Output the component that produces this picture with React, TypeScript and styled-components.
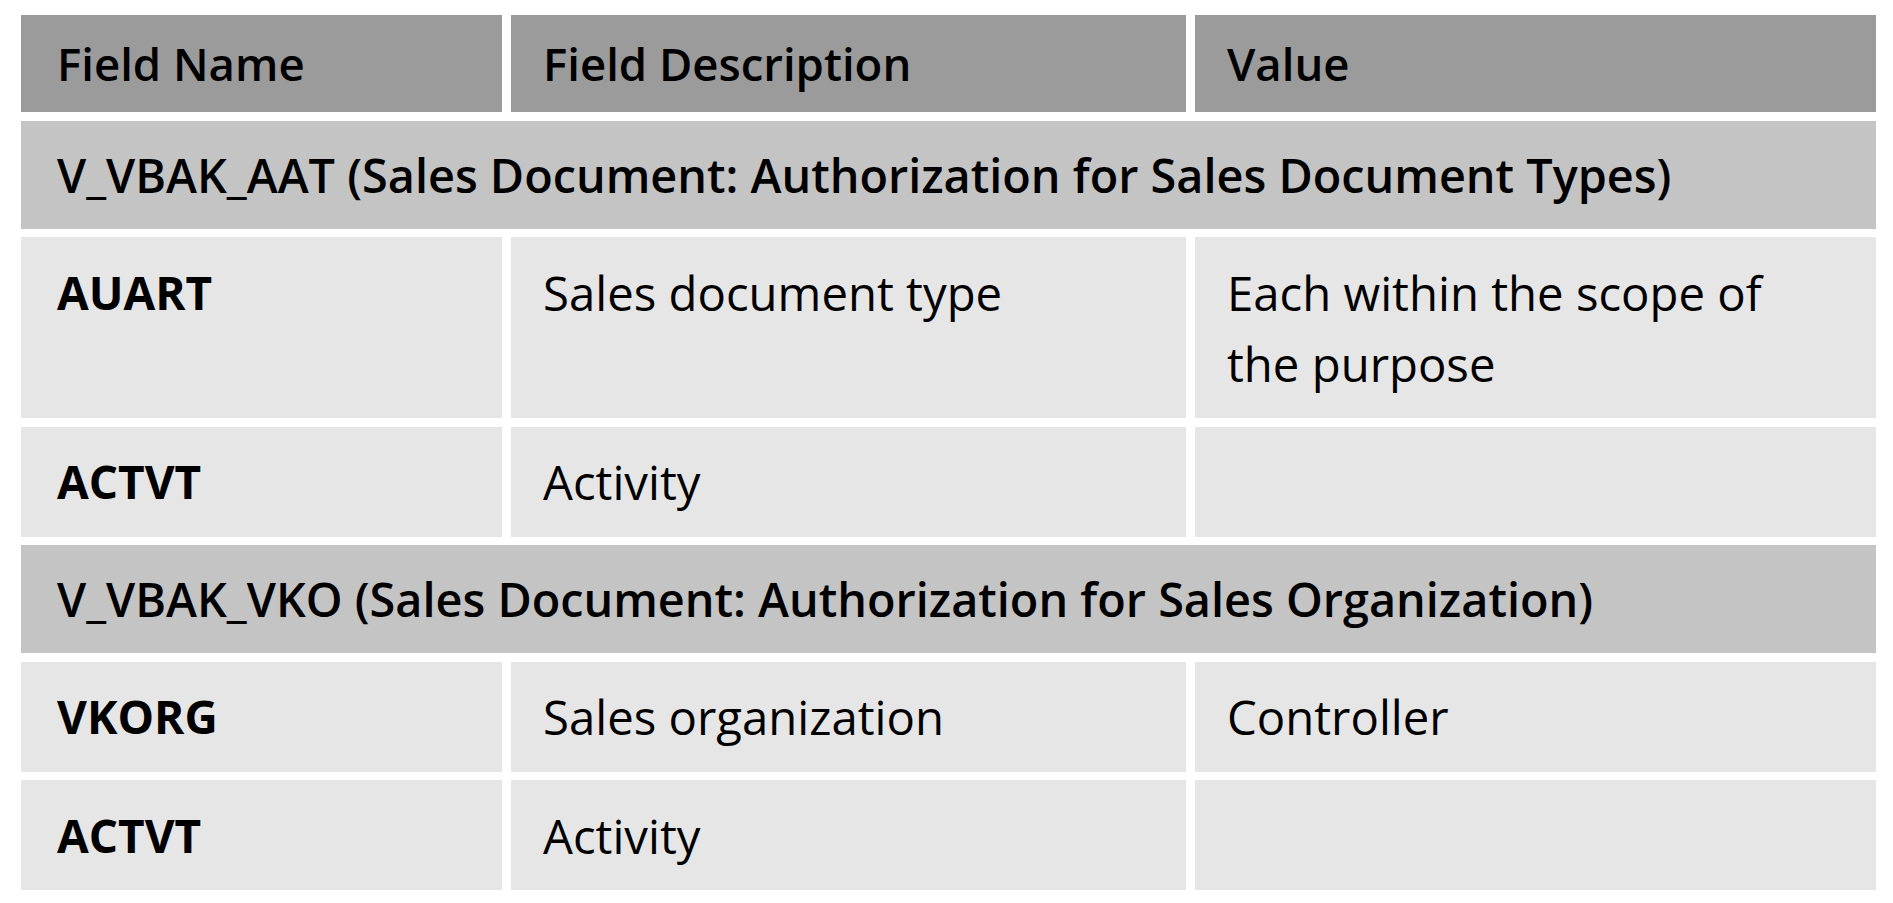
import React from "react";
import styled, { createGlobalStyle } from "styled-components";

const GlobalStyle = createGlobalStyle`
  html, body {
    margin: 0;
    padding: 0;
    background: #ffffff;
  }
  body {
    font-family: "Open Sans", "Noto Sans", sans-serif;
    color: #000000;
  }
`;

type Row =
  | { kind: "section"; title: string }
  | { kind: "field"; name: string; description: string; value: string };

const rows: Row[] = [
  { kind: "section", title: "V_VBAK_AAT (Sales Document: Authorization for Sales Document Types)" },
  { kind: "field", name: "AUART", description: "Sales document type", value: "Each within the scope of the purpose" },
  { kind: "field", name: "ACTVT", description: "Activity", value: "" },
  { kind: "section", title: "V_VBAK_VKO (Sales Document: Authorization for Sales Organization)" },
  { kind: "field", name: "VKORG", description: "Sales organization", value: "Controller" },
  { kind: "field", name: "ACTVT", description: "Activity", value: "" },
];

const App: React.FC = () => {
  return (
    <>
      <GlobalStyle />
      <Page>
        <Table>
          <HeadCell $first>Field Name</HeadCell>
          <HeadCell>Field Description</HeadCell>
          <HeadCell>Value</HeadCell>
          {rows.map((row, i) =>
            row.kind === "section" ? (
              <SectionCell key={i}>{row.title}</SectionCell>
            ) : (
              <React.Fragment key={i}>
                <NameCell>{row.name}</NameCell>
                <BodyCell>{row.description}</BodyCell>
                <ValueCell>{row.value}</ValueCell>
              </React.Fragment>
            )
          )}
        </Table>
      </Page>
    </>
  );
};

const Page = styled.div`
  padding: 15px 17px 0 21px;
`;

const Table = styled.div`
  display: grid;
  grid-template-columns: 481px 675px 1fr;
  column-gap: 9px;
  row-gap: 8.5px;
  font-size: 47px;
`;

const HeadCell = styled.div<{ $first?: boolean }>`
  background: #9b9b9b;
  padding: 13px 32px 13px ${(p) => (p.$first ? "36px" : "32px")};
  line-height: 71px;
  font-size: 45.5px;
  font-weight: 600;
`;

const SectionCell = styled.div`
  grid-column: 1 / -1;
  background: #c4c4c4;
  padding: 18px 36px;
  line-height: 72px;
  font-size: 46.8px;
  font-weight: 600;
  white-space: nowrap;
`;

const BodyCell = styled.div`
  background: #e6e6e6;
  padding: 19.5px 32px;
  line-height: 71px;
  font-size: 47.3px;
  font-weight: 400;
`;

const NameCell = styled(BodyCell)`
  padding-left: 36px;
  font-size: 46px;
  font-weight: 700;
`;

const ValueCell = styled(BodyCell)`
  padding-right: 60px;
`;

export default App;
